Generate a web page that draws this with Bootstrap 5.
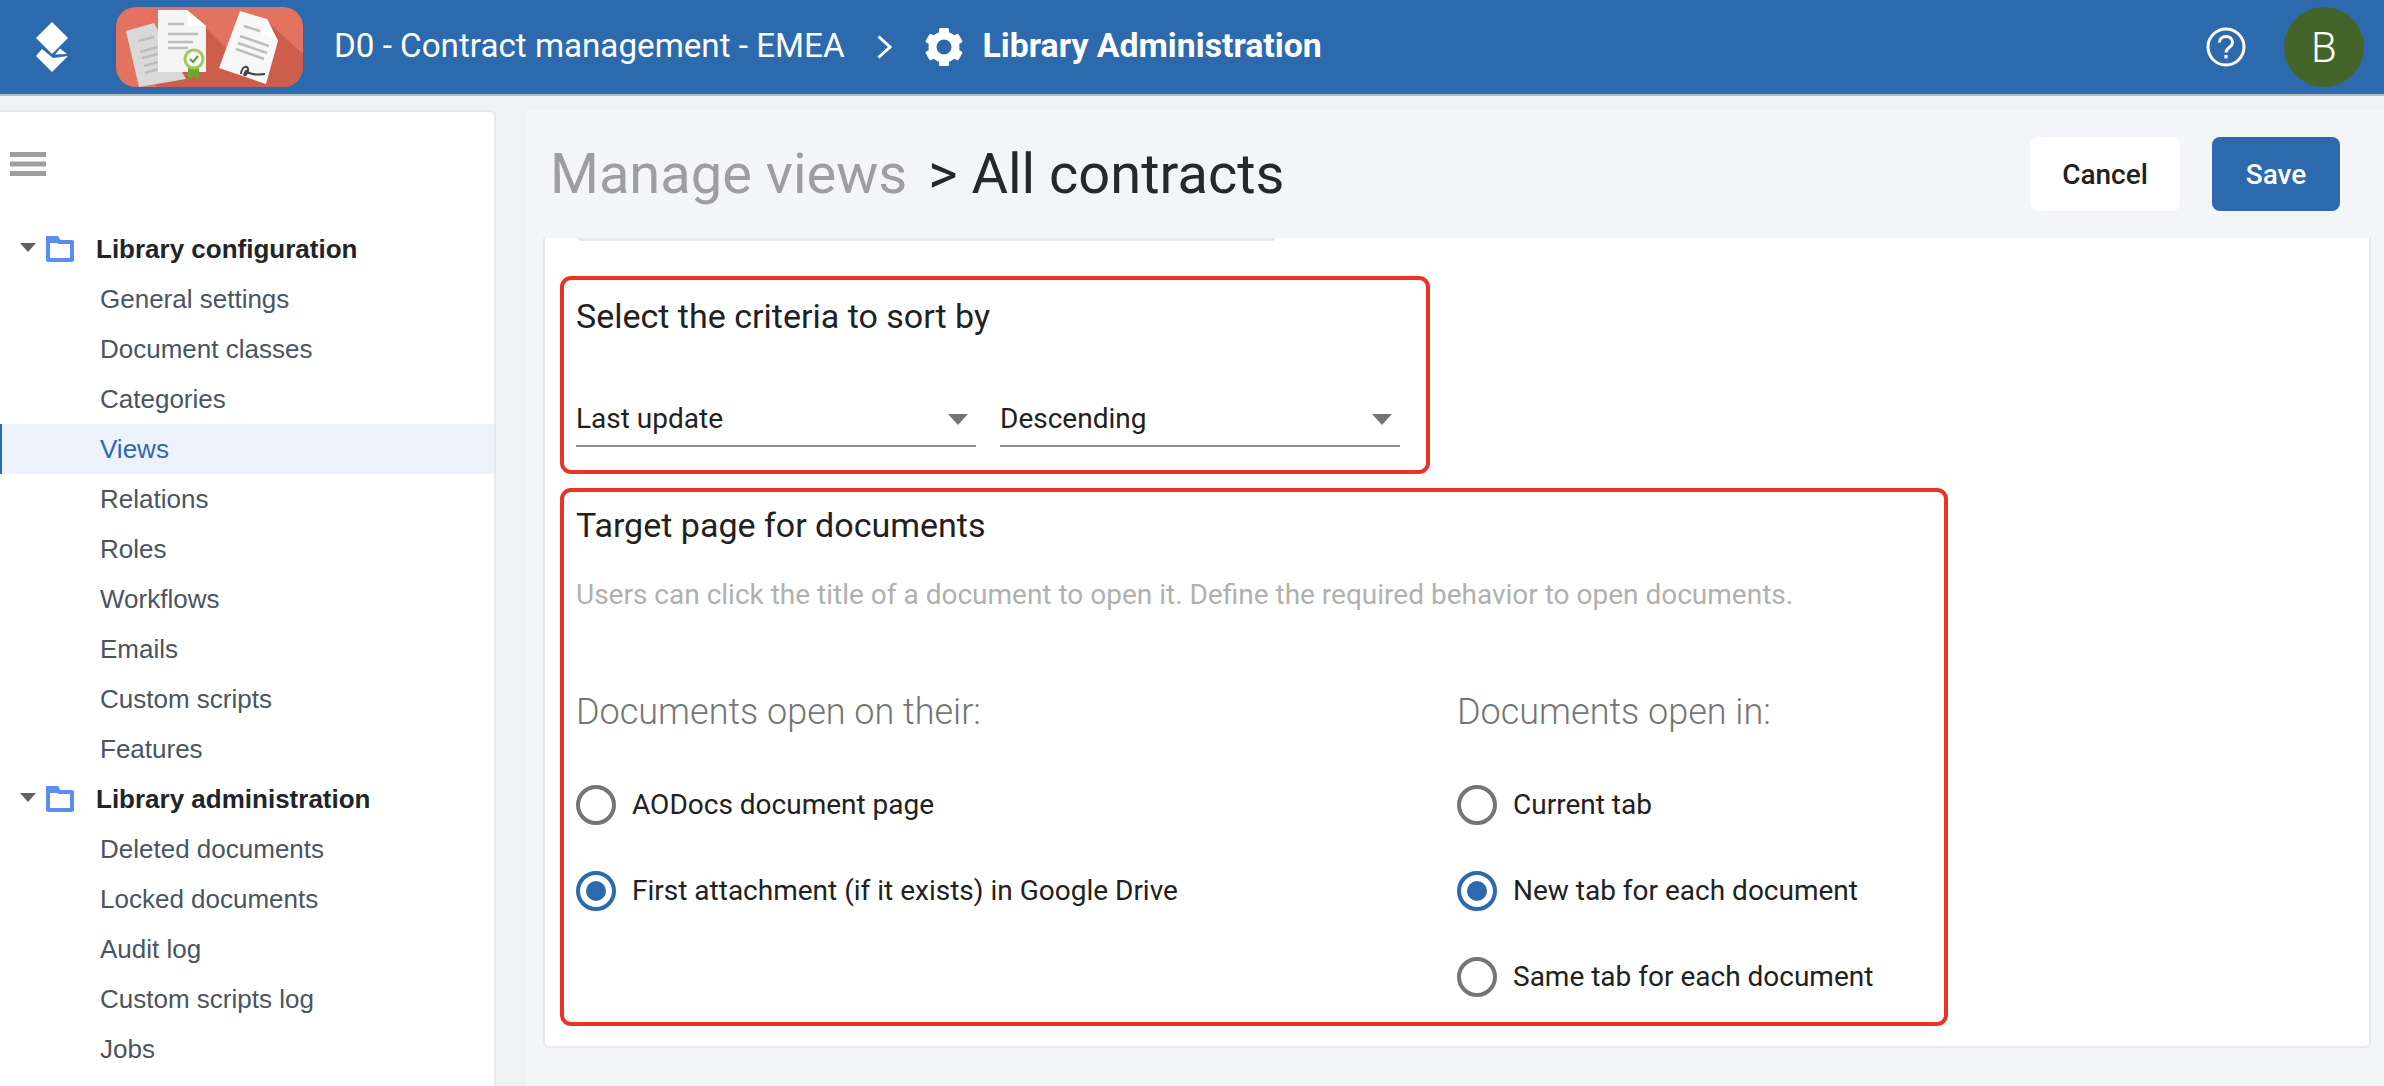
<!DOCTYPE html>
<html lang="en">
<head>
    <meta charset="UTF-8">
    <title>Library Administration</title>
    <link href="https://cdn.jsdelivr.net/npm/bootstrap@5.3.0/dist/css/bootstrap.min.css" rel="stylesheet">
    <style>
        html, body { height: 100%; overflow: hidden; }
        body { background: #eff2f5; font-family: Roboto, "Liberation Sans", sans-serif; color: #212529; }
        .top-bar { height: 96px; background: #2d6aad; border-bottom: 2px solid #b0bcc6; padding: 0; color: #fff; }
        .aod-logo { width: 32px; height: 50px; margin-left: 36px; overflow: visible; }
        .app-pic { width: 187px; height: 80px; margin-left: 48px; }
        .lib-name { font-size: 33.2px; margin-left: 31px; padding-bottom: 3px; white-space: nowrap; }
        .crumb-sep { width: 15px; height: 24px; margin-left: 32px; }
        .gear-ico { width: 38px; height: 38px; margin-left: 33px; }
        .admin-name { font-size: 33.8px; font-weight: 700; margin-left: 20px; padding-bottom: 2px; white-space: nowrap; }
        .help-ico { width: 40px; height: 40px; margin-right: 38px; }
        .user-dot { width: 80px; height: 80px; background: #44652a; font-size: 42px; font-weight: 300; margin-right: 20px; }
        .page-body { height: 990px; padding-top: 14px; }
        .side-card { width: 496px; flex: none; background: #fff; border: 2px solid #e5e9ee; border-left: 0; border-bottom: 0; border-radius: 0 6px 0 0; font-family: "Liberation Sans", Arial, sans-serif; }
        .burger { width: 36px; height: 24px; margin: 40px 0 48px 10px; }
        .tree-head { height: 50px; font-size: 26px; font-weight: 700; color: #212529; }
        .tree-caret { width: 16px; height: 9px; margin-left: 20px; margin-top: -4px; }
        .tree-folder { width: 28px; height: 26px; margin-left: 10px; margin-right: 22px; }
        .tree-item { height: 50px; padding-left: 100px; font-size: 26px; line-height: 50px; color: #4a5560; white-space: nowrap; }
        .tree-item.on { background: #ecf1fb; color: #2d6aad; border-left: 2px solid #2d6aad; padding-left: 98px; }
        .work-area { margin-left: 29px; background: #f3f5f9; }
        .title-row { height: 128px; padding-left: 25px; padding-right: 44px; }
        .page-title { font-size: 56px; font-weight: 400; margin: 0; color: #25292c; line-height: 1; }
        .page-title .back { color: #9e9e9e; margin-right: 21px; }
        .btn-plain, .btn-blue { height: 74px; font-size: 28px; font-weight: 500; border: 0; border-radius: 8px; padding-top: 8px; }
        .btn-plain { width: 150px; background: #fff; color: #212121; }
        .btn-blue { width: 128px; background: #2d6aad; color: #fff; margin-left: 32px; }
        .form-card { width: 1828px; height: 810px; margin-left: 18px; background: #fff; border: 2px solid #e6e9ee; border-top: 0; border-radius: 0 0 6px 6px; padding: 38px 0 0 15px; position: relative; }
        .cut-edge { position: absolute; left: 33px; top: 0; width: 697px; height: 3px; background: #e5e8ec; border-radius: 0 0 6px 6px; }
        .red-box { border: 4px solid #ea3323; border-radius: 11px; padding-left: 12px; }
        .box-sort { width: 870px; height: 198px; margin-bottom: 14px; }
        .box-target { width: 1388px; height: 538px; }
        .box-title { font-size: 34px; font-weight: 400; line-height: 1; color: #212121; margin: 0; }
        .box-sort .box-title { padding-top: 19px; }
        .box-target .box-title { padding-top: 16px; }
        .sort-row { margin-top: 64px; gap: 24px; }
        .sort-pick { width: 400px; height: 50px; border-bottom: 2px solid #8f8f8f; font-size: 28px; color: #212121; padding-bottom: 4px; }
        .pick-caret { width: 20px; height: 11px; margin-right: 8px; }
        .box-hint { font-size: 28px; color: #b0b0b0; margin: 39px 0 0; line-height: 1; }
        .opt-cols { margin-top: 85px; }
        .opt-col1 { width: 881px; flex: none; }
        .opt-head { font-size: 36px; font-weight: 300; color: #757575; line-height: 1; margin-bottom: 32px; }
        .opt-line { height: 86px; font-size: 28px; color: #212121; gap: 16px; }
        .dot-ring { width: 40px; height: 40px; flex: none; }
    </style>
</head>
<body>
    <nav class="navbar top-bar flex-nowrap justify-content-start">
        <svg class="aod-logo" viewBox="0 0 32 50" fill="#fff">
            <path d="M16 0L32 16 16 32 0 16Z"/>
            <path d="M0 34L6 27 17 36 32 34 16 50Z"/>
            <path d="M24 26.5L31 32 19 32.5Z"/>
        </svg>
        <svg class="app-pic" viewBox="0 0 187 80">
            <rect width="187" height="80" rx="20" fill="#e37260"/>
            <path d="M90 21L114 45 124 4 154 17 187 47V60A20 20 0 0 1 167 80H40V60Z" fill="#cc5e4b"/>
            <path d="M10 24L38 16 70 72 23 80Z" fill="#d9d9d9"/>
            <path d="M22 34L38 30M24 45L42 40M26 51L42 47M28 59L42 55M29 66L42 62" stroke="#bdbdbd" stroke-width="2.5"/>
            <path d="M42 3H71L90 19V65H42Z" fill="#f5f5f5"/>
            <path d="M71 3L90 19 72 19Z" fill="#fff"/>
            <path d="M52 17H68M52 27H82M52 35H77M52 41H72" stroke="#bdbdbd" stroke-width="2.5"/>
            <path d="M72 60V73L78 69 83 73V60Z" fill="#6da52f"/>
            <circle cx="78" cy="52" r="10.5" fill="#a5c957"/>
            <circle cx="78" cy="52" r="7.5" fill="#f5f5f5"/>
            <path d="M74 52L77 55 82 49" fill="none" stroke="#5c9b2e" stroke-width="2"/>
            <path d="M124 4L151 12 162 34 150 77 103 61Z" fill="#f7f7f7"/>
            <path d="M151 12L162 34 146 27Z" fill="#fff"/>
            <path d="M128 19L144 24M124 29L153 39M122 36L151 46M120 42L148 52" stroke="#bdbdbd" stroke-width="2.5"/>
            <path d="M125 67C126 58 133 58 132 64 130 70 126 69 130 64 134 68 140 68 149 67" fill="none" stroke="#424242" stroke-width="2"/>
        </svg>
        <span class="lib-name">D0 - Contract management - EMEA</span>
        <svg class="crumb-sep" viewBox="0 0 15 24" fill="none" stroke="#fff" stroke-width="3"><path d="M1.5 1.5L13 12 1.5 22.5"/></svg>
        <svg class="gear-ico" viewBox="0 0 38 38" fill="#fff">
            <circle cx="19" cy="19" r="11.5" fill="none" stroke="#fff" stroke-width="8"/>
            <rect x="14" y="0" width="10" height="9" rx="1.5"/>
            <rect x="14" y="0" width="10" height="9" rx="1.5" transform="rotate(60 19 19)"/>
            <rect x="14" y="0" width="10" height="9" rx="1.5" transform="rotate(120 19 19)"/>
            <rect x="14" y="0" width="10" height="9" rx="1.5" transform="rotate(180 19 19)"/>
            <rect x="14" y="0" width="10" height="9" rx="1.5" transform="rotate(240 19 19)"/>
            <rect x="14" y="0" width="10" height="9" rx="1.5" transform="rotate(300 19 19)"/>
        </svg>
        <span class="admin-name">Library Administration</span>
        <svg class="help-ico ms-auto" viewBox="0 0 40 40" fill="none" stroke="#fff" stroke-width="3">
            <circle cx="20" cy="20" r="18"/>
            <path d="M13.5 15.5C13.5 7.5 26.5 7.5 26.5 15.5 26.5 20.5 20 20.5 20 25.5"/>
            <rect x="18.4" y="28" width="3.2" height="3.4" fill="#fff" stroke="none"/>
        </svg>
        <div class="user-dot rounded-circle d-flex align-items-center justify-content-center">B</div>
    </nav>

    <div class="d-flex page-body">
        <aside class="side-card">
            <svg class="burger d-block" viewBox="0 0 36 24" fill="#9e9e9e"><rect width="36" height="5"/><rect y="9.5" width="36" height="5"/><rect y="19" width="36" height="5"/></svg>
            <div class="tree-head d-flex align-items-center">
                <svg class="tree-caret" viewBox="0 0 16 9" fill="#616161"><path d="M0 0H16L8 9Z"/></svg>
                <svg class="tree-folder" viewBox="0 0 28 26" fill="none"><path d="M2 24V2H11L13 6H26V24Z" stroke="#5b8def" stroke-width="4" stroke-linejoin="round"/><path d="M0 0H11L14 7H0Z" fill="#5b8def"/></svg>
                <span>Library configuration</span>
            </div>
            <div class="tree-item">General settings</div>
            <div class="tree-item">Document classes</div>
            <div class="tree-item">Categories</div>
            <div class="tree-item on">Views</div>
            <div class="tree-item">Relations</div>
            <div class="tree-item">Roles</div>
            <div class="tree-item">Workflows</div>
            <div class="tree-item">Emails</div>
            <div class="tree-item">Custom scripts</div>
            <div class="tree-item">Features</div>
            <div class="tree-head d-flex align-items-center">
                <svg class="tree-caret" viewBox="0 0 16 9" fill="#616161"><path d="M0 0H16L8 9Z"/></svg>
                <svg class="tree-folder" viewBox="0 0 28 26" fill="none"><path d="M2 24V2H11L13 6H26V24Z" stroke="#5b8def" stroke-width="4" stroke-linejoin="round"/><path d="M0 0H11L14 7H0Z" fill="#5b8def"/></svg>
                <span>Library administration</span>
            </div>
            <div class="tree-item">Deleted documents</div>
            <div class="tree-item">Locked documents</div>
            <div class="tree-item">Audit log</div>
            <div class="tree-item">Custom scripts log</div>
            <div class="tree-item">Jobs</div>
        </aside>

        <main class="work-area flex-grow-1">
            <div class="title-row d-flex align-items-center justify-content-between">
                <h1 class="page-title"><span class="back">Manage views</span>&gt; All contracts</h1>
                <div class="d-flex">
                    <button class="btn btn-plain" type="button">Cancel</button>
                    <button class="btn btn-blue" type="button">Save</button>
                </div>
            </div>
            <div class="form-card">
                <div class="cut-edge"></div>
                <section class="red-box box-sort">
                    <h2 class="box-title">Select the criteria to sort by</h2>
                    <div class="d-flex sort-row">
                        <div class="sort-pick d-flex align-items-center justify-content-between">
                            <span>Last update</span>
                            <svg class="pick-caret" viewBox="0 0 20 11" fill="#757575"><path d="M0 0H20L10 11Z"/></svg>
                        </div>
                        <div class="sort-pick d-flex align-items-center justify-content-between">
                            <span>Descending</span>
                            <svg class="pick-caret" viewBox="0 0 20 11" fill="#757575"><path d="M0 0H20L10 11Z"/></svg>
                        </div>
                    </div>
                </section>
                <section class="red-box box-target">
                    <h2 class="box-title">Target page for documents</h2>
                    <p class="box-hint">Users can click the title of a document to open it. Define the required behavior to open documents.</p>
                    <div class="d-flex opt-cols">
                        <div class="opt-col1">
                            <div class="opt-head">Documents open on their:</div>
                            <div class="opt-line d-flex align-items-center">
                                <svg class="dot-ring" viewBox="0 0 40 40" fill="none"><circle cx="20" cy="20" r="18" stroke="#757575" stroke-width="4"/></svg>
                                <span>AODocs document page</span>
                            </div>
                            <div class="opt-line d-flex align-items-center">
                                <svg class="dot-ring" viewBox="0 0 40 40" fill="none"><circle cx="20" cy="20" r="18" stroke="#2d6aad" stroke-width="4"/><circle cx="20" cy="20" r="10" fill="#2d6aad"/></svg>
                                <span>First attachment (if it exists) in Google Drive</span>
                            </div>
                        </div>
                        <div>
                            <div class="opt-head">Documents open in:</div>
                            <div class="opt-line d-flex align-items-center">
                                <svg class="dot-ring" viewBox="0 0 40 40" fill="none"><circle cx="20" cy="20" r="18" stroke="#757575" stroke-width="4"/></svg>
                                <span>Current tab</span>
                            </div>
                            <div class="opt-line d-flex align-items-center">
                                <svg class="dot-ring" viewBox="0 0 40 40" fill="none"><circle cx="20" cy="20" r="18" stroke="#2d6aad" stroke-width="4"/><circle cx="20" cy="20" r="10" fill="#2d6aad"/></svg>
                                <span>New tab for each document</span>
                            </div>
                            <div class="opt-line d-flex align-items-center">
                                <svg class="dot-ring" viewBox="0 0 40 40" fill="none"><circle cx="20" cy="20" r="18" stroke="#757575" stroke-width="4"/></svg>
                                <span>Same tab for each document</span>
                            </div>
                        </div>
                    </div>
                </section>
            </div>
        </main>
    </div>
    <script src="https://cdn.jsdelivr.net/npm/bootstrap@5.3.0/dist/js/bootstrap.bundle.min.js"></script>
</body>
</html>
